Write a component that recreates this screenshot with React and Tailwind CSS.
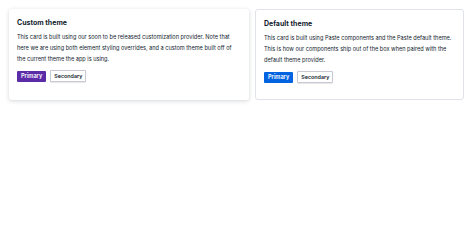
import React from 'react';

const Card = ({ title, children, primaryClass, className }) => (
    <div className={`rounded-[3px] bg-white px-2 pt-2 pb-4 ${className}`}>
        <h2 className="text-[7px] font-bold leading-[10px] text-[#121c2d] mt-[1px]">{title}</h2>
        <p className="mt-[4px] text-[5.6px] leading-[11px] text-[#121c2d]">{children}</p>
        <div className="mt-[5px] flex gap-[4px] items-center">
            <button className={`h-[11px] px-[4px] rounded-[1px] text-[5.6px] font-semibold text-white ${primaryClass}`}>Primary</button>
            <button className="h-[12px] px-[3px] rounded-[1px] border border-[#c7cad4] bg-white text-[5.4px] font-semibold text-[#121c2d] shadow-[0_0.5px_1px_rgba(0,0,0,0.1)]">Secondary</button>
        </div>
    </div>
);

export default function App() {
    return (
        <div className="min-h-screen bg-white font-['Inter',sans-serif] p-[9px]">
            <div className="flex gap-[6px] items-stretch">
                <Card
                    title="Custom theme"
                    primaryClass="bg-[#5c2ba8]"
                    className="w-[240px] shadow-[0_1px_4px_rgba(18,28,45,0.18)]"
                >
                    This card is built using our soon to be released customization provider. Note that here we are using both element styling overrides, and a custom theme built off of the current theme the app is using.
                </Card>
                <Card
                    title="Default theme"
                    primaryClass="bg-[#0263e0]"
                    className="w-[209px] border border-[#e1e3ea]"
                >
                    This card is built using Paste components and the Paste default theme. This is how our components ship out of the box when paired with the default theme provider.
                </Card>
            </div>
        </div>
    );
}
